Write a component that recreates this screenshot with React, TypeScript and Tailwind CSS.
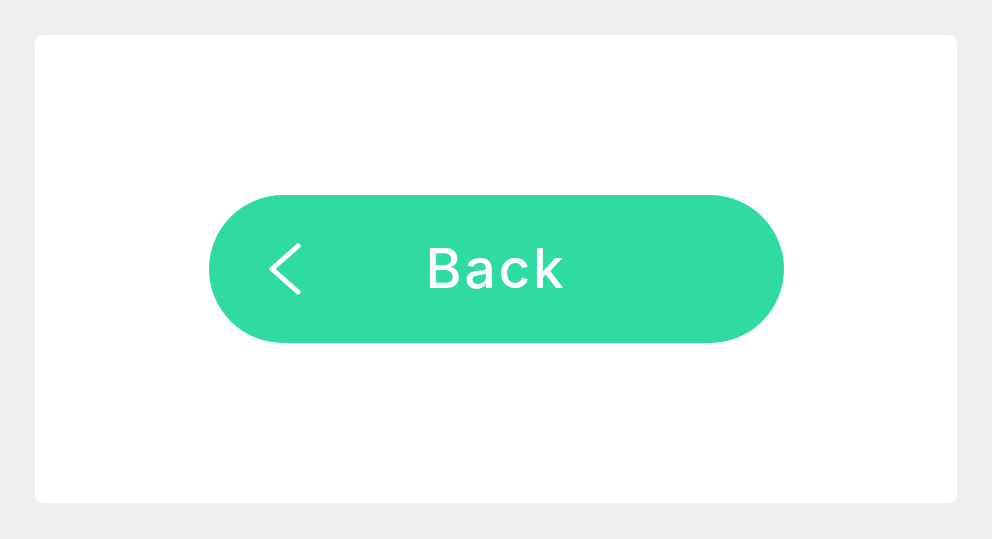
const BackButton = () => {
  return (
    <button
      type="button"
      className="grid h-[148px] w-[575px] grid-cols-[1fr_auto_1fr] items-center rounded-full bg-[#2fdba1] text-white"
    >
      <span className="flex items-center pl-[59px]">
        <svg width="34" height="56" viewBox="0 0 34 56" fill="none">
          <polyline
            points="30,5 4,28 30,51"
            stroke="currentColor"
            strokeWidth="5"
            strokeLinecap="round"
            strokeLinejoin="round"
          />
        </svg>
      </span>
      <span className="font-['Inter',sans-serif] text-[55px] leading-none font-medium tracking-[0.05em] pb-[2px]">
        Back
      </span>
      <span />
    </button>
  );
};

export default function App() {
  return (
    <div className="min-h-[539px] w-full bg-[#f0f0f0] p-[35px]">
      <div className="flex h-[468px] w-[922px] items-center justify-center rounded-[8px] bg-white">
        <BackButton />
      </div>
    </div>
  );
}
